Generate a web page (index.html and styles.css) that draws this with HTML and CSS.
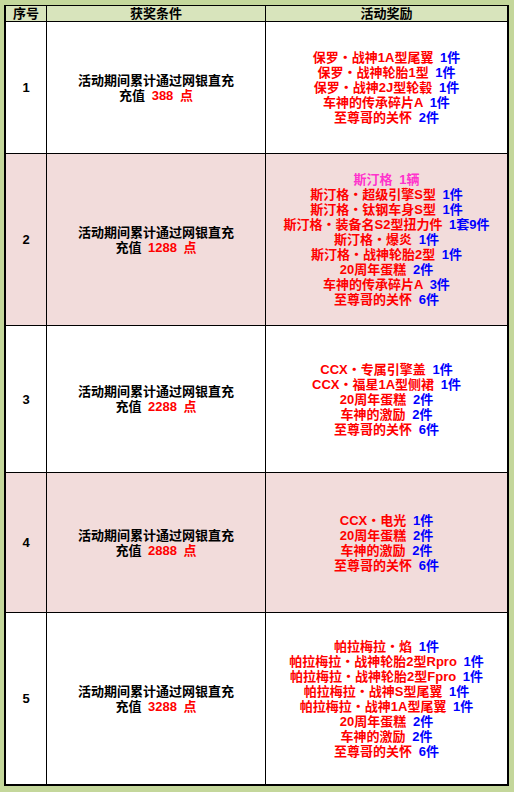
FILE: index.html
```html
<!DOCTYPE html>
<html lang="zh-CN">
<head>
<meta charset="utf-8">
<title>活动奖励</title>
<link rel="stylesheet" href="styles.css">
</head>
<body>
<div class="sheet">
  <div class="grid">
    <div class="cell head">序号</div>
    <div class="cell head">获奖条件</div>
    <div class="cell head">活动奖励</div>

    <div class="cell num">1</div>
    <div class="cell cond"><div>活动期间累计通过网银直充</div><div>充值 <span class="red">388 点</span></div></div>
    <div class="cell reward">
      <div class="red">保罗・战神1A型尾翼 <span class="blue">1件</span></div>
      <div class="red">保罗・战神轮胎1型 <span class="blue">1件</span></div>
      <div class="red">保罗・战神2J型轮毂 <span class="blue">1件</span></div>
      <div class="red">车神的传承碎片A <span class="blue">1件</span></div>
      <div class="red">至尊哥的关怀 <span class="blue">2件</span></div>
    </div>

    <div class="cell num pink">2</div>
    <div class="cell cond pink"><div>活动期间累计通过网银直充</div><div>充值 <span class="red">1288 点</span></div></div>
    <div class="cell reward pink">
      <div class="magenta">斯汀格 1辆</div>
      <div class="red">斯汀格・超级引擎S型 <span class="blue">1件</span></div>
      <div class="red">斯汀格・钛钢车身S型 <span class="blue">1件</span></div>
      <div class="red">斯汀格・装备名S2型扭力件 <span class="blue">1套9件</span></div>
      <div class="red">斯汀格・爆炎 <span class="blue">1件</span></div>
      <div class="red">斯汀格・战神轮胎2型 <span class="blue">1件</span></div>
      <div class="red">20周年蛋糕 <span class="blue">2件</span></div>
      <div class="red">车神的传承碎片A <span class="blue">3件</span></div>
      <div class="red">至尊哥的关怀 <span class="blue">6件</span></div>
    </div>

    <div class="cell num">3</div>
    <div class="cell cond"><div>活动期间累计通过网银直充</div><div>充值 <span class="red">2288 点</span></div></div>
    <div class="cell reward">
      <div class="red">CCX・专属引擎盖 <span class="blue">1件</span></div>
      <div class="red">CCX・福星1A型侧裙 <span class="blue">1件</span></div>
      <div class="red">20周年蛋糕 <span class="blue">2件</span></div>
      <div class="red">车神的激励 <span class="blue">2件</span></div>
      <div class="red">至尊哥的关怀 <span class="blue">6件</span></div>
    </div>

    <div class="cell num pink">4</div>
    <div class="cell cond pink"><div>活动期间累计通过网银直充</div><div>充值 <span class="red">2888 点</span></div></div>
    <div class="cell reward pink">
      <div class="red">CCX・电光 <span class="blue">1件</span></div>
      <div class="red">20周年蛋糕 <span class="blue">2件</span></div>
      <div class="red">车神的激励 <span class="blue">2件</span></div>
      <div class="red">至尊哥的关怀 <span class="blue">6件</span></div>
    </div>

    <div class="cell num">5</div>
    <div class="cell cond"><div>活动期间累计通过网银直充</div><div>充值 <span class="red">3288 点</span></div></div>
    <div class="cell reward">
      <div class="red">帕拉梅拉・焰 <span class="blue">1件</span></div>
      <div class="red">帕拉梅拉・战神轮胎2型Rpro <span class="blue">1件</span></div>
      <div class="red">帕拉梅拉・战神轮胎2型Fpro <span class="blue">1件</span></div>
      <div class="red">帕拉梅拉・战神S型尾翼 <span class="blue">1件</span></div>
      <div class="red">帕拉梅拉・战神1A型尾翼 <span class="blue">1件</span></div>
      <div class="red">20周年蛋糕 <span class="blue">2件</span></div>
      <div class="red">车神的激励 <span class="blue">2件</span></div>
      <div class="red">至尊哥的关怀 <span class="blue">6件</span></div>
    </div>
  </div>
</div>
</body>
</html>
```
FILE: styles.css
```css
html, body {
  margin: 0;
  padding: 0;
  background: #c4d79b;
}
body {
  width: 514px;
  height: 792px;
  overflow: hidden;
  font-family: "Liberation Sans", "Noto Sans CJK SC", sans-serif;
  font-size: 13px;
  font-weight: 700;
  line-height: 15px;
  word-spacing: 3px;
  color: #000;
}
.sheet {
  padding: 5px 0 0 4px;
}
.grid {
  display: grid;
  width: 501px;
  grid-template-columns: 40px 218px 241px;
  grid-template-rows: 15px 131px 171px 146px 139px 171px;
  gap: 1px;
  background: #000;
  border-style: solid;
  border-color: #000;
  border-width: 1px 2px 2px 2px;
}
.cell {
  background: #fff;
  display: flex;
  flex-direction: column;
  align-items: center;
  justify-content: center;
  text-align: center;
  white-space: nowrap;
}
.head {
  background: #d8e4bc;
}
.pink {
  background: #f2dcdb;
}
.red { color: #ff0000; }
.blue { color: #0000ff; }
.magenta { color: #ff33cc; }
```
